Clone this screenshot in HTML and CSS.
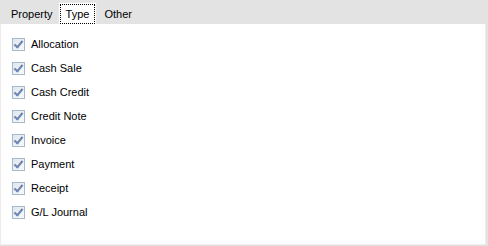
FILE: index.html
```html
<!DOCTYPE html>
<html>
<head>
    <meta charset="UTF-8">
    <title>Type</title>
    <link rel="stylesheet" href="styles.css">
</head>
<body>
    <div class="tabs">
        <div class="tab">Property</div>
        <div class="tab sel"><span class="focus">Type</span></div>
        <div class="tab">Other</div>
    </div>
    <div class="page">
        <label class="row"><span class="chk"></span>Allocation</label>
        <label class="row"><span class="chk"></span>Cash Sale</label>
        <label class="row"><span class="chk"></span>Cash Credit</label>
        <label class="row"><span class="chk"></span>Credit Note</label>
        <label class="row"><span class="chk"></span>Invoice</label>
        <label class="row"><span class="chk"></span>Payment</label>
        <label class="row"><span class="chk"></span>Receipt</label>
        <label class="row"><span class="chk"></span>G/L Journal</label>
    </div>
</body>
</html>
```

FILE: styles.css
```css
html, body {
    margin: 0;
    height: 100%;
}

body {
    font-family: "Liberation Sans", Arial, sans-serif;
    font-size: 11px;
    color: #000;
    background: #e3e3e3;
    display: flex;
    flex-direction: column;
}

.tabs {
    display: flex;
    align-items: flex-end;
    height: 24px;
    padding-left: 4px;
}

.tab {
    height: 20px;
    line-height: 20px;
    padding: 0 6px 0 7px;
    box-sizing: border-box;
}

.tab.sel {
    height: 22px;
    background: #fff;
    padding: 1px 1px 0;
    border: 1px solid #e8e8e8;
    border-bottom: 0;
    margin-left: -1px;
    position: relative;
    z-index: 1;
}

.focus {
    display: block;
    height: 20px;
    line-height: 18px;
    padding: 0 5px;
    border: 1px dotted #000;
    box-sizing: border-box;
}

.page {
    flex: 1;
    background: #fff;
    border: 1px solid #ececec;
    border-top: 0;
    margin-right: 2px;
    margin-bottom: 1px;
    padding: 8px 0 0 11px;
    display: flex;
    flex-direction: column;
}

.row {
    display: flex;
    align-items: center;
    height: 24px;
}

.chk {
    width: 13px;
    height: 13px;
    box-sizing: border-box;
    border: 1px solid #aab8cc;
    background: linear-gradient(135deg, #dfe5ee, #f8f9fb);
    margin-right: 6px;
    position: relative;
}

.chk::after {
    content: "";
    position: absolute;
    left: 3px;
    top: 0px;
    width: 3px;
    height: 7px;
    border: solid #6a84ae;
    border-width: 0 2px 2px 0;
    transform: rotate(40deg);
}
```
